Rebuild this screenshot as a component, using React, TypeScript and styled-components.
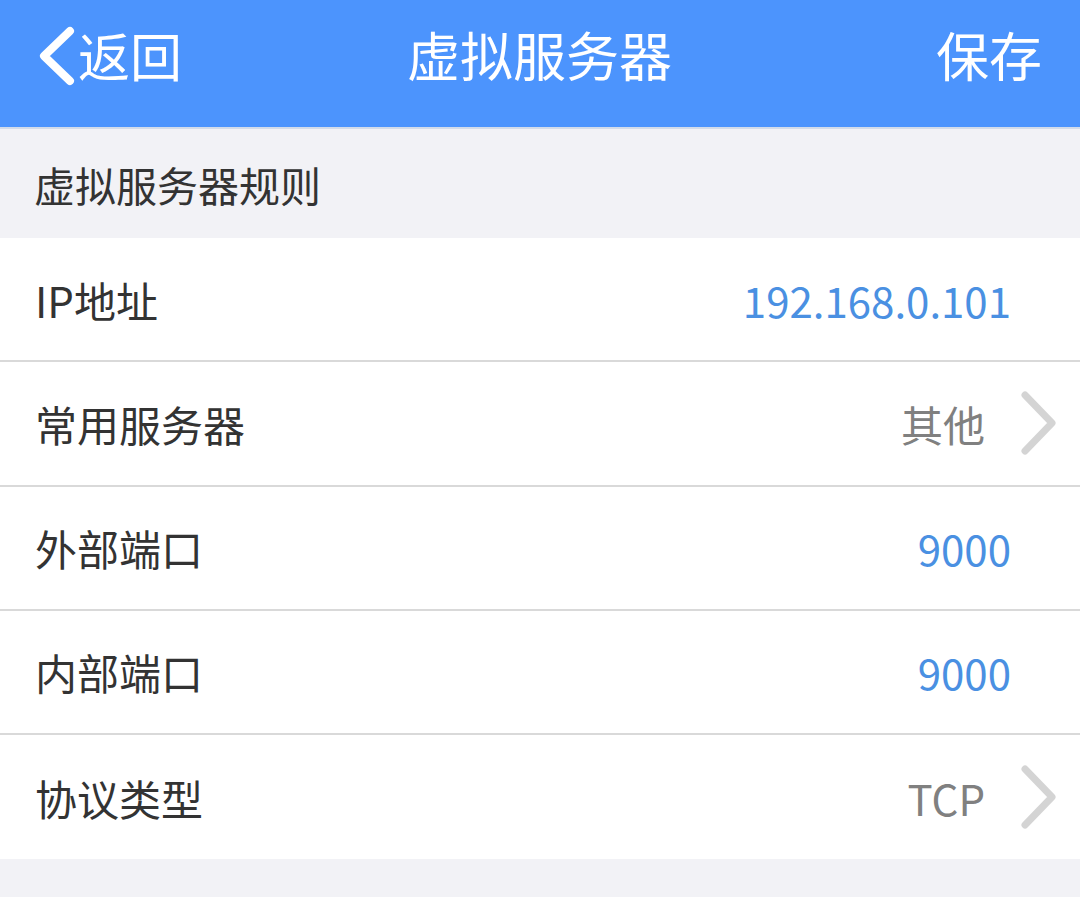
import React from "react";
import styled, { createGlobalStyle } from "styled-components";

const GlobalStyle = createGlobalStyle`
  html, body {
    margin: 0;
    padding: 0;
    background: #f2f2f6;
  }
  body {
    font-family: "Noto Sans CJK SC", "Noto Sans", sans-serif;
  }
`;

interface Rule {
  label: string;
  value: string;
  tone: "link" | "muted";
  arrow?: boolean;
}

const rules: Rule[] = [
  { label: "IP地址", value: "192.168.0.101", tone: "link" },
  { label: "常用服务器", value: "其他", tone: "muted", arrow: true },
  { label: "外部端口", value: "9000", tone: "link" },
  { label: "内部端口", value: "9000", tone: "link" },
  { label: "协议类型", value: "TCP", tone: "muted", arrow: true },
];

const BackIcon = () => (
  <svg width="40" height="64" viewBox="0 0 40 64">
    <polyline
      points="33,6 7,31 33,56"
      fill="none"
      stroke="#fff"
      strokeWidth="8"
      strokeLinecap="round"
      strokeLinejoin="round"
    />
  </svg>
);

const Chevron = () => (
  <svg width="40" height="68" viewBox="0 0 40 68">
    <polyline
      points="7,6 34,34 7,62"
      fill="none"
      stroke="#d4d4d4"
      strokeWidth="7"
      strokeLinecap="round"
      strokeLinejoin="round"
    />
  </svg>
);

export default function App() {
  return (
    <>
      <GlobalStyle />
      <Page>
        <NavBar>
          <BackButton type="button">
            <BackIcon />
            <span>返回</span>
          </BackButton>
          <Title>虚拟服务器</Title>
          <SaveButton type="button">保存</SaveButton>
        </NavBar>

        <SectionHeader>虚拟服务器规则</SectionHeader>

        <List>
          {rules.map((r) => (
            <Row key={r.label}>
              <Label>{r.label}</Label>
              <Value $tone={r.tone} $arrow={!!r.arrow}>
                {r.value}
                {r.arrow && <Chevron />}
              </Value>
            </Row>
          ))}
        </List>
      </Page>
    </>
  );
}

const Page = styled.div`
  width: 1080px;
  min-height: 897px;
  background: #f2f2f6;
`;

const NavBar = styled.header`
  height: 129px;
  box-sizing: border-box;
  background: #4c94fd;
  border-bottom: 2px solid #d3dcea;
  display: grid;
  grid-template-columns: 1fr auto 1fr;
  align-items: center;
  padding: 0 38px 18px 37px;
  color: #fff;
`;

const BackButton = styled.button`
  justify-self: start;
  display: flex;
  align-items: center;
  gap: 1px;
  background: none;
  border: none;
  padding: 0;
  color: #fff;
  font-family: inherit;
  font-size: 52px;
  line-height: 1;
  svg {
    margin-top: 4px;
  }
`;

const Title = styled.h1`
  margin: 0;
  font-size: 53px;
  font-weight: 400;
  line-height: 1;
`;

const SaveButton = styled.button`
  justify-self: end;
  background: none;
  border: none;
  padding: 0;
  color: #fff;
  font-family: inherit;
  font-size: 53px;
  line-height: 1;
`;

const SectionHeader = styled.div`
  height: 109px;
  display: flex;
  align-items: center;
  padding: 0 34px;
  font-size: 41px;
  color: #333;
`;

const List = styled.div`
  background: #fff;
`;

const Row = styled.div`
  height: 124.25px;
  box-sizing: border-box;
  display: flex;
  align-items: center;
  justify-content: space-between;
  padding: 0 22px 0 35px;
  border-bottom: 2px solid #d9d9d9;
  &:last-child {
    border-bottom: none;
  }
`;

const Label = styled.span`
  font-size: 42px;
  color: #333;
`;

const Value = styled.span<{ $tone: "link" | "muted"; $arrow: boolean }>`
  display: flex;
  align-items: center;
  gap: 33px;
  margin-right: ${(p) => (p.$arrow ? "0" : "47px")};
  font-size: 42px;
  color: ${(p) => (p.$tone === "link" ? "#4a90e2" : "#808080")};
`;
